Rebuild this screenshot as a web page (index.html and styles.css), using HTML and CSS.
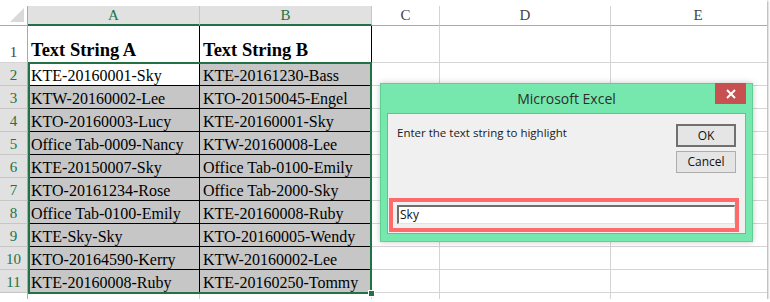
FILE: index.html
```html
<!DOCTYPE html>
<html lang="en">
<head>
  <meta charset="UTF-8" />
  <title>Highlight text string - Excel</title>
  <link rel="stylesheet" href="styles.css">
</head>
<body>
  <div class="frame">
    <div class="sheet">
      <div class="corner">
        <svg width="14" height="14" viewBox="0 0 14 14"><polygon points="14,0 14,14 0,14" fill="#d9d9d9"/></svg>
      </div>
      <div class="colhead sel">A</div>
      <div class="colhead sel">B</div>
      <div class="colhead">C</div>
      <div class="colhead">D</div>
      <div class="colhead">E</div>

      <div class="rowhead">1</div>
      <div class="cell title">Text String A</div>
      <div class="cell title">Text String B</div>
      <div class="cell"></div><div class="cell"></div><div class="cell"></div>

      <div class="rowhead sel">2</div>
      <div class="cell data active">KTE-20160001-Sky</div>
      <div class="cell data">KTE-20161230-Bass</div>
      <div class="cell"></div><div class="cell"></div><div class="cell"></div>

      <div class="rowhead sel">3</div>
      <div class="cell data">KTW-20160002-Lee</div>
      <div class="cell data">KTO-20150045-Engel</div>
      <div class="cell"></div><div class="cell"></div><div class="cell"></div>

      <div class="rowhead sel">4</div>
      <div class="cell data">KTO-20160003-Lucy</div>
      <div class="cell data">KTE-20160001-Sky</div>
      <div class="cell"></div><div class="cell"></div><div class="cell"></div>

      <div class="rowhead sel">5</div>
      <div class="cell data">Office Tab-0009-Nancy</div>
      <div class="cell data">KTW-20160008-Lee</div>
      <div class="cell"></div><div class="cell"></div><div class="cell"></div>

      <div class="rowhead sel">6</div>
      <div class="cell data">KTE-20150007-Sky</div>
      <div class="cell data">Office Tab-0100-Emily</div>
      <div class="cell"></div><div class="cell"></div><div class="cell"></div>

      <div class="rowhead sel">7</div>
      <div class="cell data">KTO-20161234-Rose</div>
      <div class="cell data">Office Tab-2000-Sky</div>
      <div class="cell"></div><div class="cell"></div><div class="cell"></div>

      <div class="rowhead sel">8</div>
      <div class="cell data">Office Tab-0100-Emily</div>
      <div class="cell data">KTE-20160008-Ruby</div>
      <div class="cell"></div><div class="cell"></div><div class="cell"></div>

      <div class="rowhead sel">9</div>
      <div class="cell data">KTE-Sky-Sky</div>
      <div class="cell data">KTO-20160005-Wendy</div>
      <div class="cell"></div><div class="cell"></div><div class="cell"></div>

      <div class="rowhead sel">10</div>
      <div class="cell data">KTO-20164590-Kerry</div>
      <div class="cell data">KTW-20160002-Lee</div>
      <div class="cell"></div><div class="cell"></div><div class="cell"></div>

      <div class="rowhead sel">11</div>
      <div class="cell data">KTE-20160008-Ruby</div>
      <div class="cell data">KTE-20160250-Tommy</div>
      <div class="cell"></div><div class="cell"></div><div class="cell"></div>

      <div class="rowhead">12</div>
      <div class="cell"></div><div class="cell"></div>
      <div class="cell"></div><div class="cell"></div><div class="cell"></div>

      <div class="selection"><span class="handle"></span></div>
    </div>

    <div class="dialog">
      <div class="dialog-title">Microsoft Excel</div>
      <div class="close-btn">
        <svg width="10" height="10" viewBox="0 0 10 10"><path d="M1 1 L9 9 M9 1 L1 9" stroke="#fff" stroke-width="2"/></svg>
      </div>
      <div class="dialog-body">
        <div class="dialog-top">
          <div class="prompt">Enter the text string to highlight</div>
          <div class="buttons">
            <div class="btn default">OK</div>
            <div class="btn">Cancel</div>
          </div>
        </div>
        <div class="mark">
          <div class="text-input">Sky</div>
        </div>
      </div>
    </div>
  </div>
</body>
</html>
```

FILE: styles.css
```css
body {
  margin: 0;
  background: #fff;
  overflow: hidden;
}
.frame {
  position: relative;
  width: 767px;
  height: 299px;
  overflow: hidden;
  background: #fff;
  box-shadow: 1px 1px 2px rgba(0,0,0,0.35);
}
.sheet {
  position: relative;
  margin-top: 6px;
  display: grid;
  grid-template-columns: 28px 172px 172px 68px 171px 175px;
  grid-template-rows: 20px 37px repeat(11, 23px);
  font-family: "Liberation Serif", "Times New Roman", serif;
}
.sheet > div {
  box-sizing: border-box;
}
.corner {
  border-right: 1px solid #ababab;
  border-bottom: 1px solid #ababab;
  display: flex;
  align-items: flex-end;
  justify-content: flex-end;
  padding: 0 3px 3px 0;
}
.corner svg {
  display: block;
}
.colhead {
  border-right: 1px solid #d4d4d4;
  border-bottom: 1px solid #ababab;
  color: #444;
  font-size: 15px;
  line-height: 19px;
  text-align: center;
}
.colhead.sel {
  background: #e1e1e1;
  color: #217346;
  border-bottom: 2px solid #217346;
  border-right-color: #c6c6c6;
}
.rowhead {
  border-right: 1px solid #ababab;
  border-bottom: 1px solid #d4d4d4;
  color: #444;
  font-size: 15px;
  display: flex;
  align-items: flex-end;
  justify-content: center;
  line-height: 20px;
}
.rowhead.sel {
  background: #e1e1e1;
  color: #217346;
  border-bottom-color: #c6c6c6;
}
.cell {
  border-right: 1px solid #d4d4d4;
  border-bottom: 1px solid #d4d4d4;
  display: flex;
  align-items: flex-end;
  padding-left: 3px;
  font-size: 16px;
  line-height: 18px;
  color: #000;
  white-space: nowrap;
  overflow: hidden;
}
.cell.title {
  font-weight: bold;
  font-size: 18.5px;
  line-height: 22px;
  padding-bottom: 1px;
  border-right-color: #000;
}
.cell.data {
  background: #c6c6c6;
  border-right-color: #000;
  border-bottom-color: #000;
}
.cell.data.active {
  background: #fff;
}
.selection {
  position: absolute;
  left: 28px;
  top: 56px;
  width: 344px;
  height: 232px;
  border: 2px solid #217346;
  box-sizing: border-box;
}
.handle {
  position: absolute;
  right: -5px;
  bottom: -5px;
  width: 5px;
  height: 5px;
  background: #217346;
  border: 1px solid #fff;
}

.dialog {
  position: absolute;
  left: 380px;
  top: 83px;
  width: 373px;
  height: 159px;
  box-sizing: border-box;
  background: #76e8ad;
  border: 1px solid #5fcf95;
  box-shadow: 0 0 6px rgba(0,0,0,0.22);
  padding: 0 6px 7px 6px;
  display: flex;
  flex-direction: column;
  font-family: "Open Sans", "Noto Sans", sans-serif;
}
.dialog-title {
  height: 29px;
  line-height: 29px;
  text-align: center;
  font-size: 14px;
  color: #2d2d2d;
}
.close-btn {
  position: absolute;
  top: -1px;
  right: 6px;
  width: 31px;
  height: 21px;
  background: #c75050;
  display: flex;
  align-items: center;
  justify-content: center;
}
.close-btn svg {
  display: block;
}
.dialog-body {
  flex: 1;
  background: #f0f0f0;
  border: 1px solid #5ec48f;
  display: flex;
  flex-direction: column;
}
.dialog-top {
  display: flex;
  justify-content: space-between;
  padding: 10px 9px 0 9px;
}
.prompt {
  font-size: 11.5px;
  color: #1a1a1a;
  margin-top: 1px;
}
.buttons {
  display: flex;
  flex-direction: column;
  gap: 4px;
}
.btn {
  box-sizing: border-box;
  width: 60px;
  height: 22px;
  border: 1px solid #adadad;
  background: #e5e5e5;
  font-size: 12px;
  line-height: 20px;
  text-align: center;
  color: #111;
}
.btn.default {
  height: 23px;
  border: 2px solid #707070;
  line-height: 19px;
}
.mark {
  margin: auto 6px 1px 1px;
  border: 4px solid #ff6b6b;
  padding: 3px 0 4px 4px;
}
.text-input {
  height: 19px;
  box-sizing: border-box;
  background: #fff;
  border-top: 2px solid #6e6e6e;
  border-left: 2px solid #6e6e6e;
  border-right: 1px solid #e3e3e3;
  border-bottom: 1px solid #e3e3e3;
  font-size: 12px;
  line-height: 16px;
  padding-left: 1px;
  color: #111;
}
```
